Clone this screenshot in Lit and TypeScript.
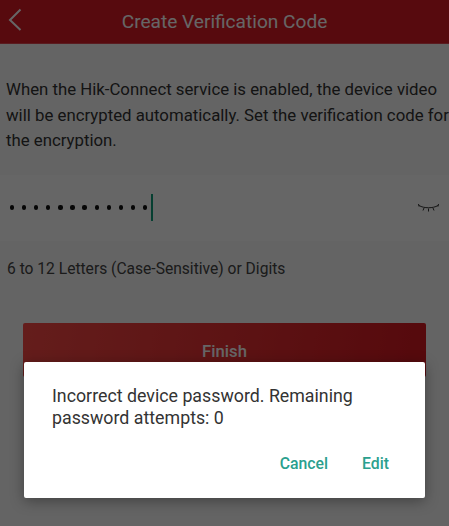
import { LitElement, html, css } from "lit";
import { customElement } from "lit/decorators.js";

@customElement("app-root")
export class AppRoot extends LitElement {
  static styles = css`
    :host { display: block; position: relative; width: 449px; height: 526px; overflow: hidden; background: #fff; font-family: Roboto, "Noto Sans", sans-serif; }
    .page { display: flex; flex-direction: column; height: 526px; background: #fafafa; }
    .header { height: 43px; flex: none; display: flex; align-items: center; justify-content: center; position: relative; background: #da1925; color: #fff; font-size: 19.1px; border-bottom: 1px solid #e04650; }
    .back { position: absolute; left: 8px; top: 8px; width: 14px; height: 24px; }
    .desc { margin: 0; padding: 33px 0 0 6px; white-space: nowrap; font-size: 16.8px; line-height: 25.5px; color: #333; }
    .field { margin-top: 21px; height: 66px; flex: none; background: #fff; display: flex; align-items: center; padding: 0 10px; }
    .dots { display: flex; gap: 7.9px; }
    .dots i { display: block; width: 4.2px; height: 4.2px; border-radius: 50%; background: #111; }
    .caret { width: 2px; height: 27px; background: #0f9d7c; margin-left: 4px; }
    .eye { margin-left: auto; width: 21px; height: 10px; }
    .hint { padding: 18px 0 0 7px; font-size: 15.6px; line-height: 20px; color: #444; }
    .finish { margin: 44px 23px 0; height: 54px; flex: none; box-sizing: border-box; padding-top: 19px; text-align: center; color: #fff; font-size: 16.7px; font-weight: 500; background: linear-gradient(100deg, #fb4a46, #d81a22 95%); border-radius: 2px; }
    .scrim { position: absolute; inset: 0; background: rgba(0,0,0,.6); }
    .dialog { position: absolute; left: 24px; top: 362px; width: 401px; height: 136px; box-sizing: border-box; background: #fff; border-radius: 2px; box-shadow: 0 3px 14px rgba(0,0,0,.35); padding: 23px 28px 0; display: flex; flex-direction: column; }
    .msg { font-size: 17.8px; line-height: 22px; color: #333; }
    .actions { display: flex; justify-content: flex-end; gap: 34px; margin-top: 25px; padding-right: 8px; color: #2aa08e; font-size: 15.8px; font-weight: 500; line-height: 20px; }
  `;

  render() {
    return html`
      <div class="page">
        <div class="header">
          <svg class="back" viewBox="0 0 14 24" fill="none" stroke="#fff" stroke-width="2"><path d="M12.5 1.5 2 12l10.500 10"/></svg>
          Create Verification Code
        </div>
        <p class="desc">When the Hik-Connect service is enabled, the device video<br />will be encrypted automatically. Set the verification code for<br />the encryption.</p>
        <div class="field">
          <div class="dots">${Array.from({ length: 12 }, () => html`<i></i>`)}</div>
          <div class="caret"></div>
          <svg class="eye" viewBox="0 0 21 10" fill="none" stroke="#333" stroke-width="1"><path d="M1 2.500C6 5.500 15 5.500 20 2.500M1 3.500 .5 1M20 3.500 20.500 1M6 5 5 7.500M10.500 5.500V8.500M15 5l1 2.500"/></svg>
        </div>
        <div class="hint">6 to 12 Letters (Case-Sensitive) or Digits</div>
        <div class="finish">Finish</div>
      </div>
      <div class="scrim"></div>
      <div class="dialog">
        <div class="msg">Incorrect device password. Remaining password attempts: 0</div>
        <div class="actions"><span>Cancel</span><span>Edit</span></div>
      </div>
    `;
  }
}
